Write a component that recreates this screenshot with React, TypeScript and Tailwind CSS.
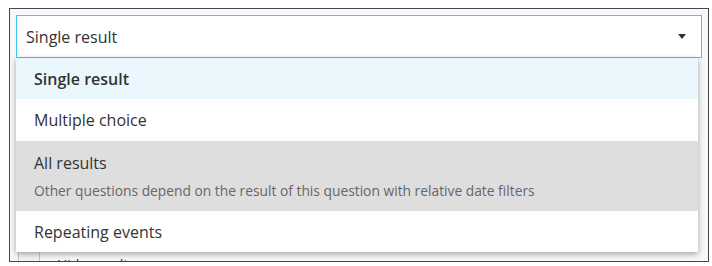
import React from "react";

export default function App() {
  const font = { fontFamily: '"Open Sans", "Noto Sans", sans-serif' };
  return (
    <div className="w-[712px] h-[266px] bg-white pt-[8px] pl-[9px]" style={font}>
      <div className="w-[700px] h-[254px] border border-[#3d4a52] bg-[#f8f8fa] overflow-hidden px-[6px] pt-[6px] relative">
        <div className="relative">
          <div className="h-[43px] border border-[#3cc8f5] bg-white flex items-center justify-between pl-[9px] pr-[15px]">
            <span className="text-[16px] text-[#333]">Single result</span>
            <svg width="8" height="5" viewBox="0 0 8 5"><path d="M0 0h8L4 5z" fill="#333" /></svg>
          </div>
          <div className="flex items-start gap-[17px] mt-[188px] pl-[2px]">
            <div className="w-[22px] h-[24px] border border-[#c4c8cc] bg-[#f4f4f6]" />
            <span className="text-[14px] text-[#333] pt-[8px]">Hide results</span>
          </div>
          <div className="absolute left-0 top-[43px] w-[682px] bg-white shadow-[0_2px_6px_rgba(0,0,0,0.35)] z-10">
            <div className="h-[41px] flex items-center pl-[18px] bg-[#eaf8fe] text-[16px] font-semibold text-[#333]">Single result</div>
            <div className="h-[42px] flex items-center pl-[18px] text-[16px] text-[#333]">Multiple choice</div>
            <div className="h-[70px] flex flex-col justify-center pl-[18px] bg-[#dedede]">
              <div className="text-[16px] text-[#333] leading-[22px]">All results</div>
              <div className="text-[13.8px] text-[#666] leading-[20px] mt-[7px]">Other questions depend on the result of this question with relative date filters</div>
            </div>
            <div className="h-[41px] flex items-center pl-[18px] text-[16px] text-[#333]">Repeating events</div>
          </div>
        </div>
      </div>
    </div>
  );
}
